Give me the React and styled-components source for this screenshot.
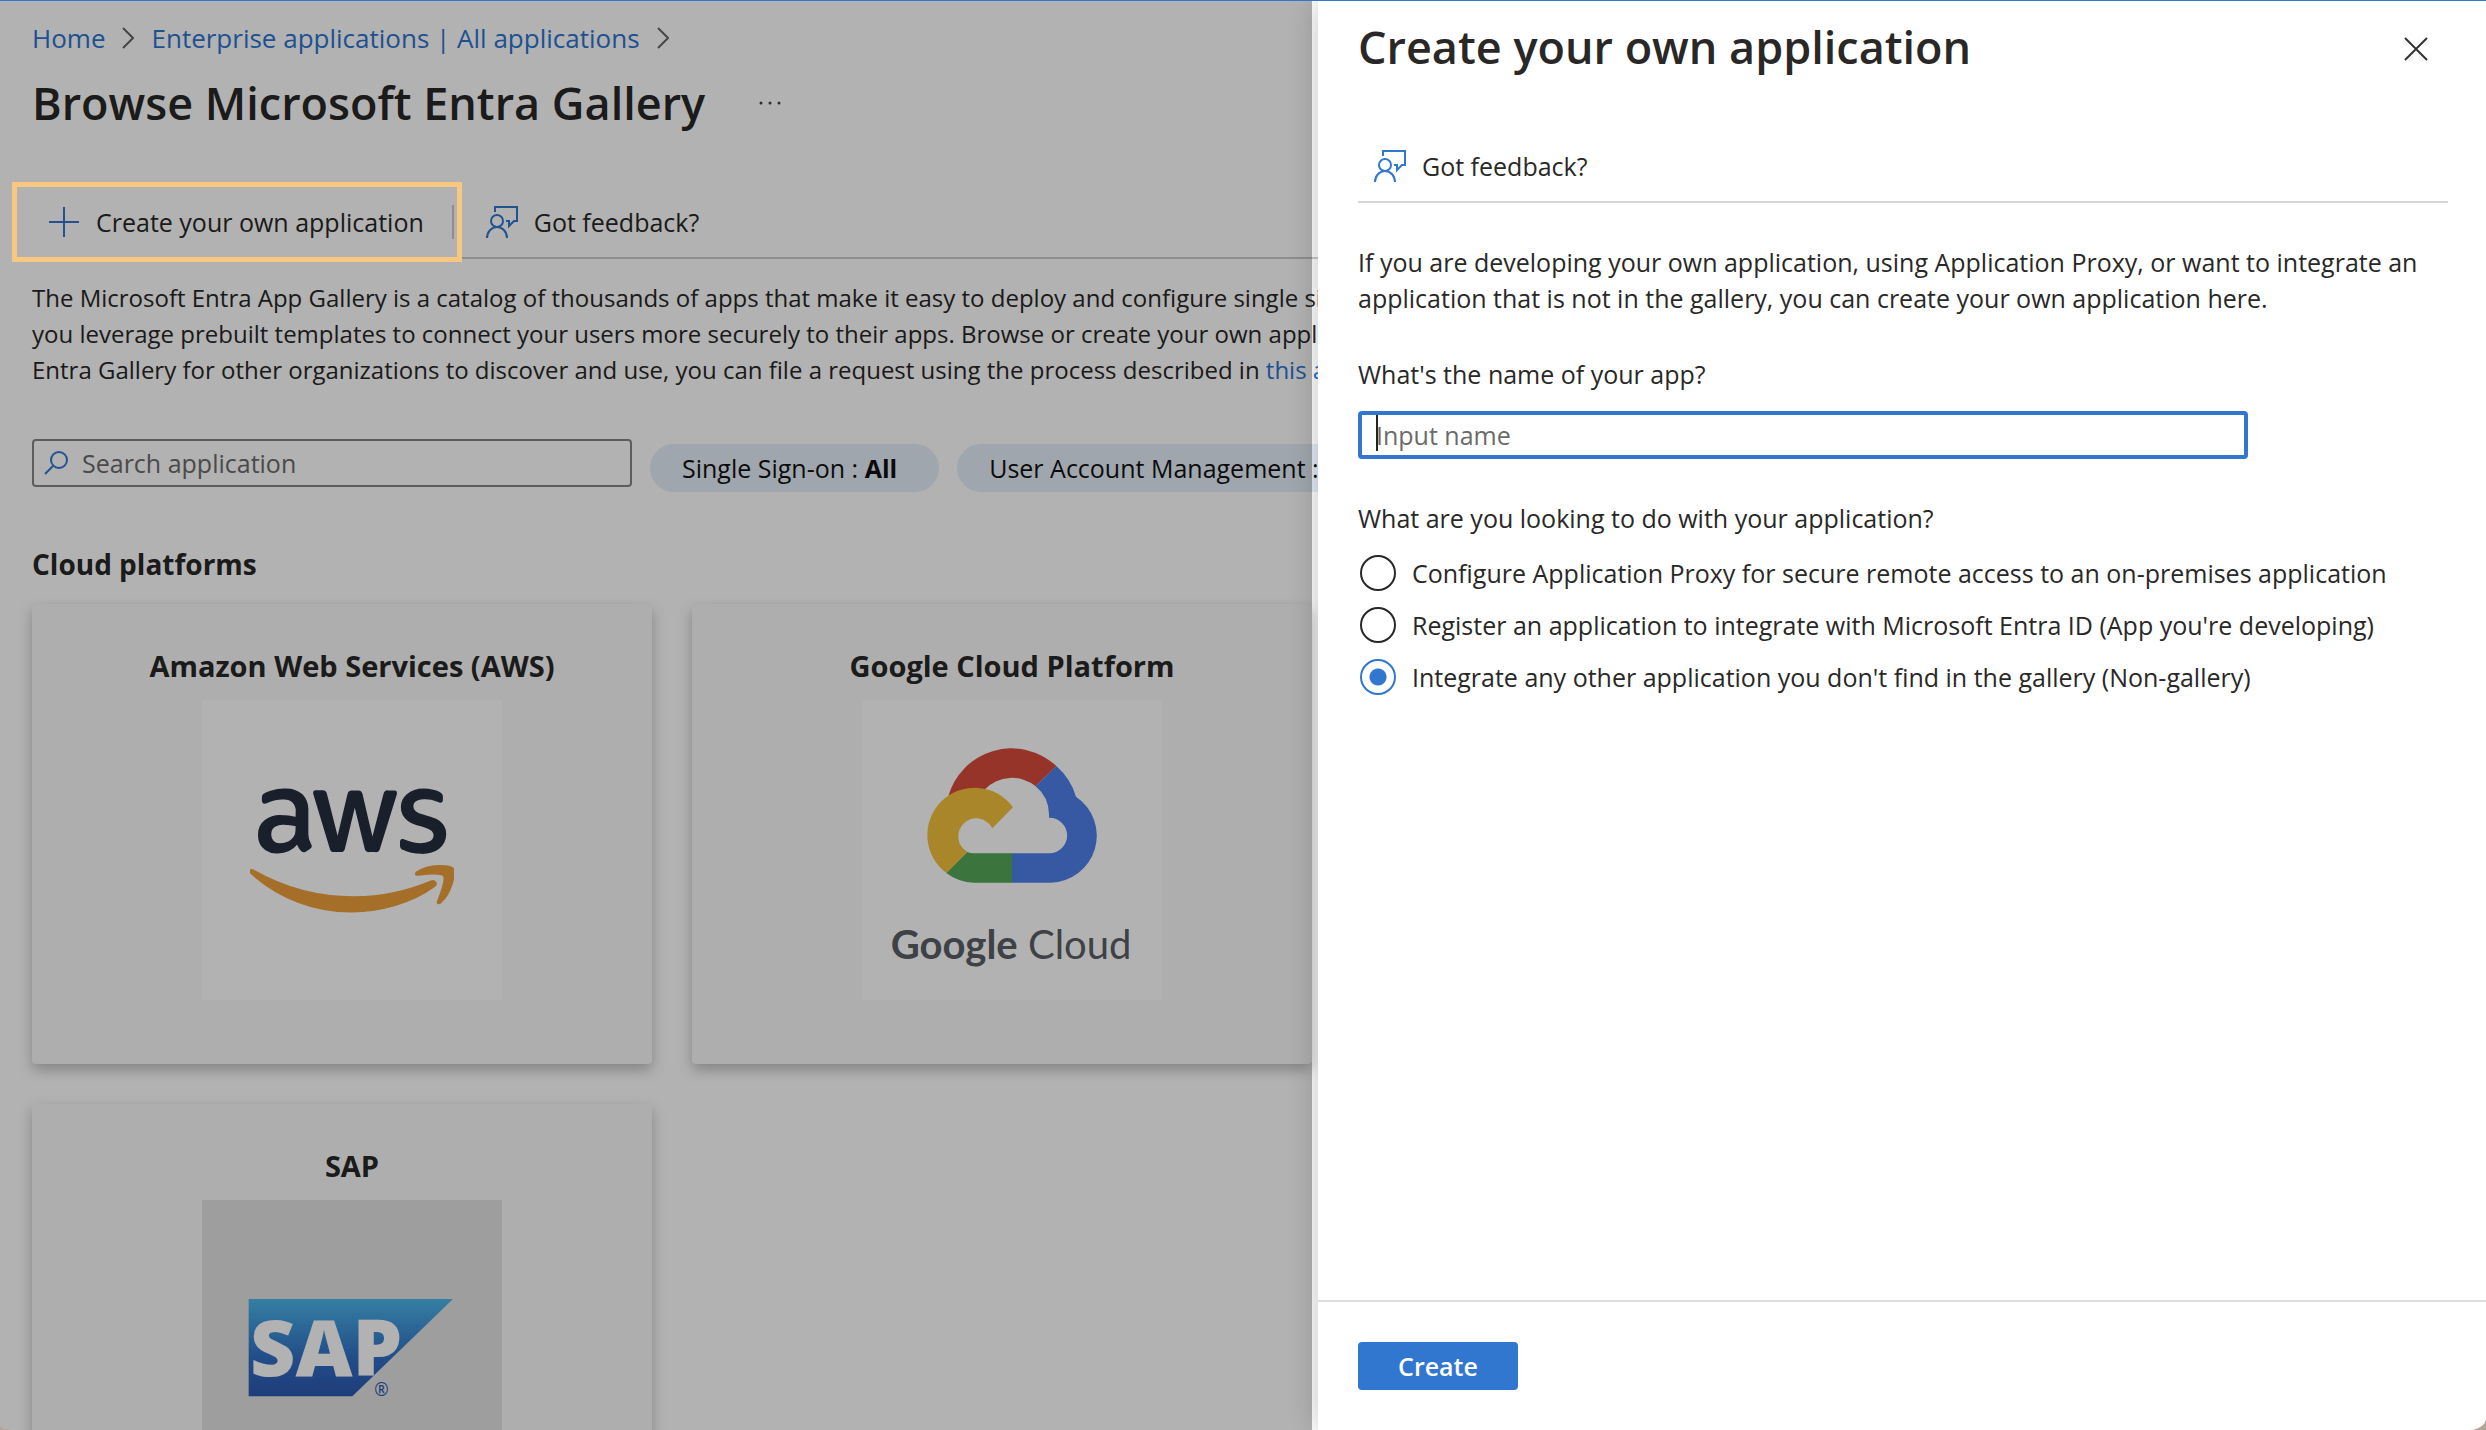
import React, { useState } from 'react'
import styled, { createGlobalStyle } from 'styled-components';
import { FaAws } from 'react-icons/fa';

const FeedbackIcon = () => (
  <Icon $size={32} viewBox="0 0 32 32" aria-hidden="true">
    <path d="M9 6V1H31V15H28L23 20V15H20" />
    <circle cx="11" cy="15" r="6" />
    <path d="M1 32A10 11 0 0 1 21 32" />
  </Icon>
);

const PlusIcon = () => (
  <Icon $size={32} viewBox="0 0 32 32" aria-hidden="true">
    <path d="M16 1V31M1 16H31" />
  </Icon>
);

const SearchIcon = () => (
  <Icon $size={24} viewBox="0 0 24 24" aria-hidden="true">
    <circle cx="15" cy="9" r="8" />
    <path d="M9 15L1 23" />
  </Icon>
);

const Chevron = () => (
  <ChevronSvg viewBox="0 0 12 22" aria-hidden="true">
    <path d="M1 1L11 11L1 21" />
  </ChevronSvg>
);

const AwsLogo = () => (
  <AwsBox>
    <AwsColors viewBox="0 0 1 1" aria-hidden="true">
      <linearGradient id="awsColors" gradientUnits="userSpaceOnUse" x1="0" y1="0" x2="0" y2="512">
        <stop offset="0.55" stopColor="#252f3e" />
        <stop offset="0.55" stopColor="#ec9f3c" />
      </linearGradient>
    </AwsColors>
    <AwsIcon title="AWS" />
  </AwsBox>
);

const GoogleLogo = () => (
  <Logo viewBox="66 60 900 900">
    <path fill="#d94b3d" d="M324 352A197 197 0 0 1 649 258L587 319A112 112 0 0 0 435 328L380 380Z" />
    <path fill="#4f80ea" d="M649 258A196 196 0 0 1 708 350A141 141 0 0 1 632 608H516V520H628A53 53 0 0 0 628 413H627V402A111 111 0 0 0 587 319Z" />
    <path fill="#55a657" d="M516 520V608H402A141 141 0 0 1 319 579L382 516Q391 520 402 520Z" />
    <path fill="#f2c03c" d="M519 382A142 142 0 1 0 319 579L382 516A54 54 0 1 1 457 445Z" />
    <GoogleText x="152" y="836"><tspan fontWeight="700">Google</tspan> Cloud</GoogleText>
  </Logo>
);

const SapLogo = () => (
  <Logo viewBox="36 210 900 900">
    <linearGradient id="sapBlue" x1="0" y1="0" x2="0" y2="1">
      <stop offset="0" stopColor="#4db6ea" />
      <stop offset="0.6" stopColor="#316fc4" />
      <stop offset="1" stopColor="#2c57b0" />
    </linearGradient>
    <path fill="url(#sapBlue)" d="M176 507H789L487 799H176Z" />
    <SapText x="180" y="739">SAP</SapText>
    <RegisteredText x="553" y="798">®</RegisteredText>
  </Logo>
);

const platforms = [
  { name: 'Amazon Web Services (AWS)', logo: <AwsLogo /> },
  { name: 'Google Cloud Platform', logo: <GoogleLogo /> },
  { name: 'SAP', logo: <SapLogo />, background: '#e3e3e3' },
];

const purposes = [
  { id: 'proxy', label: 'Configure Application Proxy for secure remote access to an on-premises application' },
  { id: 'register', label: "Register an application to integrate with Microsoft Entra ID (App you're developing)" },
  { id: 'gallery', label: "Integrate any other application you don't find in the gallery (Non-gallery)" },
];

const Gallery = () => {
  return (
    <Page>
      <Breadcrumb aria-label="Breadcrumb">
        <Link href="#home">Home</Link>
        <Chevron />
        <Link href="#apps">Enterprise applications | All applications</Link>
        <Chevron />
      </Breadcrumb>
      <TitleRow>
        <Title>Browse Microsoft Entra Gallery</Title>
        <MoreButton type="button" aria-label="More">
          <Dots viewBox="0 0 22 4" aria-hidden="true">
            <circle cx="2" cy="2" r="1.5" />
            <circle cx="11" cy="2" r="1.5" />
            <circle cx="20" cy="2" r="1.5" />
          </Dots>
        </MoreButton>
      </TitleRow>
      <Toolbar>
        <Highlighted>
          <ToolButton type="button"><PlusIcon />Create your own application</ToolButton>
          <Separator />
        </Highlighted>
        <ToolButton type="button"><FeedbackIcon />Got feedback?</ToolButton>
      </Toolbar>
      <Intro>
        The Microsoft Entra App Gallery is a catalog of thousands of apps that make it easy to deploy and configure single sign-on.<br />
        you leverage prebuilt templates to connect your users more securely to their apps. Browse or create your own application here.<br />
        Entra Gallery for other organizations to discover and use, you can file a request using the process described in <Link href="#article">this article</Link>.
      </Intro>
      <Filters>
        <SearchBox>
          <SearchIcon />
          <SearchInput type="search" placeholder="Search application" aria-label="Search application" />
        </SearchBox>
        <Pill type="button">Single Sign-on : <b>All</b></Pill>
        <Pill type="button">User Account Management : <b>All</b></Pill>
      </Filters>
      <SectionTitle>Cloud platforms</SectionTitle>
      <Cards>
        {platforms.map(({ name, logo, background }) => (
          <Card key={name}>
            <CardTitle>{name}</CardTitle>
            <CardPicture $background={background}>{logo}</CardPicture>
          </Card>
        ))}
      </Cards>
    </Page>
  )
}

const CreatePanel = () => {
  const [name, setName] = useState('');
  const [purpose, setPurpose] = useState('gallery');

  return (
    <Drawer role="dialog" aria-labelledby="panel-title" onSubmit={(e) => e.preventDefault()}>
      <DrawerBody>
        <DrawerHeader>
          <Title id="panel-title">Create your own application</Title>
          <CloseButton type="button" aria-label="Close">
            <CloseIcon viewBox="0 0 24 24" aria-hidden="true">
              <path d="M1 1L23 23M23 1L1 23" />
            </CloseIcon>
          </CloseButton>
        </DrawerHeader>
        <DrawerToolbar>
          <ToolButton type="button"><FeedbackIcon />Got feedback?</ToolButton>
        </DrawerToolbar>
        <Description>
          If you are developing your own application, using Application Proxy, or want to integrate an application that is not in the gallery, you can create your own application here.
        </Description>
        <Label htmlFor="app-name">What's the name of your app?</Label>
        <NameInput
          id="app-name"
          type="text"
          placeholder="Input name"
          value={name}
          onChange={(e) => setName(e.target.value)}
        />
        <Purposes>
          <Legend>What are you looking to do with your application?</Legend>
          {purposes.map(({ id, label }) => (
            <RadioLabel key={id}>
              <Radio
                type="radio"
                name="purpose"
                checked={purpose === id}
                onChange={() => setPurpose(id)}
              />
              {label}
            </RadioLabel>
          ))}
        </Purposes>
      </DrawerBody>
      <DrawerFooter>
        <CreateButton type="submit">Create</CreateButton>
      </DrawerFooter>
    </Drawer>
  )
}

const App = () => {
  return (
    <Window>
      <GlobalStyle />
      <Gallery />
      <Layer>
        <Scrim />
        <CreatePanel />
      </Layer>
    </Window>
  )
}

export default App;

const GlobalStyle = createGlobalStyle`
  * {
    box-sizing: border-box;
  }

  body {
    margin: 0;
    background: #b3a596;
  }

  body, button, input {
    font-family: "Open Sans", "Noto Sans", sans-serif;
    font-size: 25px;
    line-height: 36px;
    color: #292827;
  }

  button {
    padding: 0;
    border: 0;
    background: none;
    cursor: pointer;
  }
`

const Window = styled.div`
  position: relative;
  height: 100vh;
  overflow: hidden;
  background: #fff;
  border-top: 1px solid #3277cf;
  border-radius: 0 0 18px 16px / 0 0 12px 5px;
`

const Page = styled.main`
  padding: 19px 32px 0;
  white-space: nowrap;
`

const Icon = styled.svg`
  flex: none;
  width: ${({ $size }) => $size}px;
  height: ${({ $size }) => $size}px;
  fill: none;
  stroke: #3277cf;
  stroke-width: 2;
`

const ChevronSvg = styled.svg`
  width: 12px;
  height: 22px;
  fill: none;
  stroke: #666;
  stroke-width: 2;
`

const Breadcrumb = styled.nav`
  display: flex;
  align-items: center;
  gap: 17px;
  font-size: 26px;
`

const Link = styled.a`
  color: #2c75d1;
  text-decoration: none;
`

const TitleRow = styled.div`
  display: flex;
  align-items: center;
  gap: 54px;
  margin: 15px 0 52px;
`

const Title = styled.h1`
  margin: 0;
  font-size: 45px;
  line-height: 64px;
  font-weight: 600;
`

const MoreButton = styled.button`
  display: flex;
`

const Dots = styled.svg`
  width: 22px;
  height: 4px;
  fill: #444;
`

const Toolbar = styled.div`
  display: flex;
  align-items: center;
  gap: 32px;
  height: 72px;
  margin-right: -32px;
  border-bottom: 2px solid #ccc;
`

const ToolButton = styled.button`
  display: flex;
  align-items: center;
  gap: 16px;
`

/* The outline lies above the scrim so that the button stays marked */
const Highlighted = styled.div`
  position: relative;
  display: flex;
  align-items: center;
  gap: 28px;
  padding-left: 16px;

  &::after {
    content: "";
    position: absolute;
    z-index: 2;
    inset: -22px -8px -22px -20px;
    border: 5px solid #f9c880;
  }
`

const Separator = styled.span`
  width: 2px;
  height: 34px;
  background: #ccc;
`

const Intro = styled.p`
  margin: 21px 0 51px;
  font-size: 24px;
`

const Filters = styled.div`
  display: flex;
  align-items: flex-end;
  gap: 18px;
  height: 53px;
`

const SearchBox = styled.div`
  display: flex;
  align-items: center;
  align-self: flex-start;
  gap: 14px;
  width: 600px;
  height: 48px;
  padding: 0 10px;
  border: 2px solid #868686;
  border-radius: 4px;
`

const SearchInput = styled.input`
  flex: 1;
  padding: 0;
  border: 0;
  outline: 0;
  background: none;

  &::placeholder {
    color: #6b6b6b;
  }
`

const Pill = styled.button`
  height: 48px;
  padding: 0 42px 0 32px;
  border-radius: 24px;
  background: #e4eef8;
  color: #111;
`

const SectionTitle = styled.h2`
  margin: 54px 0 22px;
  font-size: 28px;
  line-height: 36px;
  font-weight: 700;
`

const Cards = styled.div`
  display: grid;
  grid-template-columns: repeat(2, 620px);
  gap: 40px;
`

const Card = styled.section`
  display: flex;
  flex-direction: column;
  align-items: center;
  gap: 16px;
  padding: 44px 0 64px 20px;
  background: #f9f9f9;
  border-radius: 4px;
  box-shadow: 0 6px 14px rgba(0, 0, 0, 0.26);
`

const CardTitle = styled.h3`
  margin: 0;
  font-size: 29px;
  line-height: 36px;
  font-weight: 700;
`

const CardPicture = styled.div`
  width: 300px;
  height: 300px;
  background: ${({ $background }) => $background || '#fff'};
`

const Logo = styled.svg`
  display: block;
  width: 100%;
  height: 100%;
`

const AwsBox = styled.div`
  display: flex;
  justify-content: center;
  padding-top: 69px;
`

const AwsColors = styled.svg`
  width: 0;
  height: 0;
`

const AwsIcon = styled(FaAws)`
  width: 204px;
  height: 163px;

  path {
    fill: url(#awsColors);
    stroke: url(#awsColors);
    stroke-width: 5;
  }
`

const GoogleText = styled.text`
  font-family: Lato, sans-serif;
  font-size: 120px;
  fill: #5a5d63;
`

const SapText = styled.text`
  font-size: 236px;
  font-weight: 800;
  fill: #fff;
`

const RegisteredText = styled.text`
  font-size: 52px;
  fill: #2c57b0;
`

const Layer = styled.div`
  position: absolute;
  inset: 0;
  z-index: 1;
  display: flex;
  gap: 6px;
`

const Scrim = styled.div`
  flex: 1;
  background: rgba(0, 0, 0, 0.3);
`

const Drawer = styled.form`
  display: flex;
  flex-direction: column;
  width: 1168px;
  max-width: 100%;
  background: #fff;
  box-shadow: 0 0 28px rgba(0, 0, 0, 0.24);
`

const DrawerBody = styled.div`
  flex: 1;
  padding: 14px 38px 0 40px;
`

const DrawerHeader = styled.header`
  display: flex;
  justify-content: space-between;
  align-items: center;
  padding-right: 20px;
`

const CloseButton = styled.button`
  display: flex;
  padding-top: 4px;
`

const CloseIcon = styled.svg`
  width: 24px;
  height: 24px;
  fill: none;
  stroke: #333;
  stroke-width: 2;
`

const DrawerToolbar = styled.div`
  display: flex;
  align-items: center;
  height: 72px;
  margin-top: 52px;
  padding-left: 16px;
  border-bottom: 2px solid #d6d6d6;
`

const Description = styled.p`
  margin: 41px 0 40px;
`

const Label = styled.label`
  display: block;
`

const NameInput = styled.input`
  display: block;
  width: 890px;
  max-width: 100%;
  height: 48px;
  margin: 19px 0 41px;
  padding: 0 14px;
  border: 4px solid #3277cf;
  border-radius: 4px;
  outline: 0;
  /* caret */
  background: linear-gradient(#222, #222) 14px 0 / 2px 36px no-repeat;

  &::placeholder {
    color: #6b6b6b;
  }
`

const Purposes = styled.fieldset`
  display: flex;
  flex-direction: column;
  gap: 16px;
  margin: 0;
  padding: 0;
  border: 0;
`

const Legend = styled.legend`
  margin-bottom: 19px;
  padding: 0;
`

const RadioLabel = styled.label`
  display: flex;
  align-items: center;
  gap: 16px;
`

const Radio = styled.input`
  appearance: none;
  flex: none;
  width: 36px;
  height: 36px;
  margin: 0 0 0 2px;
  border: 2px solid #292827;
  border-radius: 50%;

  &:checked {
    border-color: #3277cf;
    background: radial-gradient(circle, #3277cf 8px, transparent 9px);
  }
`

const DrawerFooter = styled.footer`
  padding: 40px;
  border-top: 2px solid #dedede;
`

const CreateButton = styled.button`
  width: 160px;
  height: 48px;
  border-radius: 4px;
  background: #3277cf;
  color: #fff;
  font-weight: 600;
`
